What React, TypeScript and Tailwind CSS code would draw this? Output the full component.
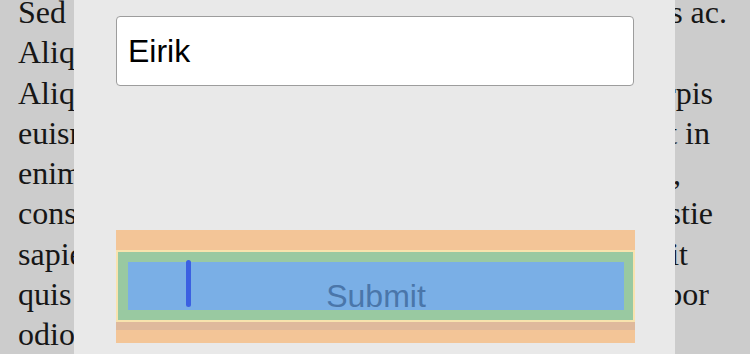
const lines = [
  { left: 'Sed', right: 'nulla lacus ac.', pad: 'pr-[23px]' },
  { left: 'Aliquam', right: '', pad: 'pr-[23px]' },
  { left: 'Aliquam', right: 'nec turpis', pad: 'pr-[37px]' },
  { left: 'euismod', right: 'laoreet at in', pad: 'pr-[40px]' },
  { left: 'enim', right: 'quis veniam,', pad: 'pr-[69px]' },
  { left: 'consectetur', right: 'nunc molestie', pad: 'pr-[37px]' },
  { left: 'sapien', right: 'donec sit', pad: 'pr-[62px]' },
  { left: 'quis', right: 'sed tempor', pad: 'pr-[41px]' },
  { left: 'odio', right: '', pad: 'pr-[23px]' },
]

export default function App() {
  return (
    <div className="relative h-[354px] w-[750px] overflow-hidden bg-[#cccccc]">
      {/* page text behind the sheet */}
      <div className="-mt-[8px] font-['Liberation_Serif',serif] text-[32px] leading-[40.25px] text-[#161616]">
        {lines.map((line, i) => (
          <div key={i} className={`flex justify-between whitespace-nowrap pl-[18px] ${line.pad}`}>
            <span>{line.left}</span>
            <span>{line.right}</span>
          </div>
        ))}
      </div>

      {/* sheet */}
      <div className="absolute inset-y-0 left-[74px] w-[601px] bg-[#e9e9e9] font-['Liberation_Sans',Arial,sans-serif]">
        <div className="ml-[42px] mt-[16px] flex h-[70px] w-[518px] items-center rounded-[4px] border-[1.5px] border-[#9d9d9d] bg-white pl-[11px] text-[32px] text-black">
          Eirik
        </div>

        <div className="ml-[42px] mt-[144px] w-[519px] bg-[#f3c597] pt-[20px]">
          <div className="border-2 border-[#f8e3ae] bg-[#99c9a1] p-[10px] pr-[9px]">
            <div className="relative h-[48px] bg-[#7aafe6] pt-[18px] text-center text-[32px] leading-none text-[#4a76aa]">
              Submit
              <span className="absolute left-[58px] top-[-2px] h-[47px] w-[5px] rounded-full bg-[#3b60e2]" />
            </div>
          </div>
          <div className="h-[8px] bg-[#dfb99c]" />
          <div className="h-[13px]" />
        </div>
      </div>
    </div>
  )
}
